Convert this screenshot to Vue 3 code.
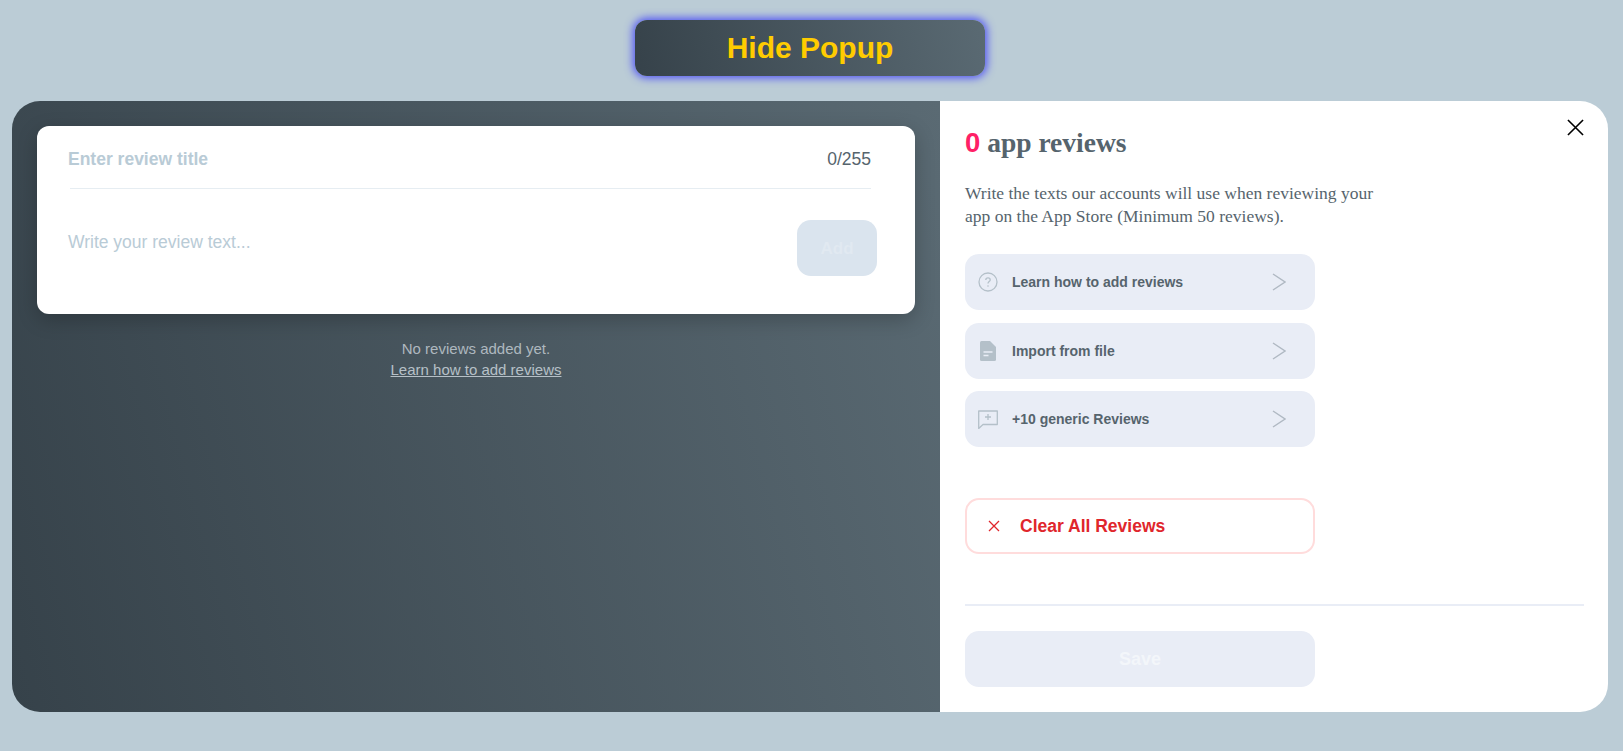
<script setup>
const actions = [
  { label: 'Learn how to add reviews', icon: 'help' },
  { label: 'Import from file', icon: 'file' },
  { label: '+10 generic Reviews', icon: 'comment' }
];
</script>

<template>
  <div class="page">
    <button class="toggle-btn">Hide Popup</button>

    <div class="popup">
      <div class="editor">
        <div class="review-card">
          <div class="title-row">
            <span class="title-placeholder">Enter review title</span>
            <span class="counter">0/255</span>
          </div>
          <div class="text-row">
            <span class="text-placeholder">Write your review text...</span>
            <button class="add-btn">Add</button>
          </div>
        </div>
        <div class="empty">
          <p>No reviews added yet.</p>
          <a href="#">Learn how to add reviews</a>
        </div>
      </div>

      <div class="sidebar">
        <svg class="close" viewBox="0 0 18 18" width="17" height="17">
          <path d="M1 1 17 17M17 1 1 17" stroke="#000" stroke-width="1.7" fill="none" />
        </svg>

        <h2><span class="count">0</span> app reviews</h2>
        <p class="desc">
          Write the texts our accounts will use when reviewing your<br />
          app on the App Store (Minimum 50 reviews).
        </p>

        <div class="actions">
          <button v-for="a in actions" :key="a.label" class="action">
            <svg class="action-icon" viewBox="0 0 20 20" width="20" height="20">
              <template v-if="a.icon === 'help'">
                <circle cx="10" cy="10" r="9" fill="none" stroke="#b4c0c9" stroke-width="1.3" />
                <path d="M7.8 8c0-1.3 1-2.1 2.2-2.1s2.2.8 2.2 2c0 1.6-2.2 1.7-2.2 3.5" fill="none" stroke="#b4c0c9" stroke-width="1.3" />
                <circle cx="10" cy="14" r=".8" fill="#b4c0c9" />
              </template>
              <template v-else-if="a.icon === 'file'">
                <path d="M2 1.500A1.500 1.500 0 0 1 3.500 0H12L18 6V18.500A1.500 1.500 0 0 1 16.500 20H3.500A1.500 1.500 0 0 1 2 18.500Z" fill="#b4c0c9" />
                <path d="M5.500 11h9M5.500 14.500h5" stroke="#e9edf6" stroke-width="1.300" />
              </template>
              <template v-else>
                <path d="M.7 2h18.600v13.500H5L.7 19.500Z" fill="none" stroke="#b4c0c9" stroke-width="1.300" stroke-linejoin="round" />
                <path d="M10 5v6M7 8h6" stroke="#b4c0c9" stroke-width="1.300" />
              </template>
            </svg>
            <span class="action-label">{{ a.label }}</span>
            <svg class="chevron" viewBox="0 0 14 18" width="14" height="18">
              <path d="M1 1 13 9 1 17" fill="none" stroke="#b0b9c3" stroke-width="1.500" />
            </svg>
          </button>
        </div>

        <button class="clear-btn">
          <svg viewBox="0 0 12 12" width="12" height="12">
            <path d="M1 1 11 11M11 1 1 11" stroke="#e0262c" stroke-width="1.300" fill="none" />
          </svg>
          <span>Clear All Reviews</span>
        </button>

        <div class="separator"></div>

        <button class="save-btn">Save</button>
      </div>
    </div>
  </div>
</template>

<style>
html, body { background: #bbccd6; }
</style>

<style scoped>
.page {
  box-sizing: border-box;
  height: 751px;
  padding: 20px 15px 40px 12px;
  display: flex;
  flex-direction: column;
  align-items: center;
  background: #bbccd6;
  font-family: "Liberation Sans", Arial, sans-serif;
  overflow: hidden;
}

button { font-family: inherit; border: none; cursor: pointer; }

.toggle-btn {
  width: 350px;
  height: 56px;
  flex: none;
  border-radius: 12px;
  background: linear-gradient(75deg, #36424a, #5a6a73);
  box-shadow: 0 0 9px 2px #4f52f5;
  color: #ffcc00;
  font-size: 30px;
  font-weight: 700;
}

.popup {
  width: 100%;
  height: 611px;
  margin-top: 25px;
  flex: none;
  display: flex;
  border-radius: 28px;
  overflow: hidden;
}

.editor {
  width: 928px;
  flex: none;
  box-sizing: border-box;
  padding: 25px 25px 0;
  background: linear-gradient(75deg, #36424a, #5a6a73);
}

.review-card {
  height: 188px;
  box-sizing: border-box;
  padding: 0 38px 0 31px;
  background: #fff;
  border-radius: 12px;
  box-shadow: 0 6px 20px rgba(0, 0, 0, 0.22);
}

.title-row {
  box-sizing: border-box;
  height: 63px;
  padding-top: 4px;
  margin-right: 6px;
  margin-left: 2px;
  display: flex;
  justify-content: space-between;
  align-items: center;
  border-bottom: 1px solid #e6edf2;
}

.title-placeholder {
  margin-left: -2px;
  color: #b9cbd6;
  font-size: 17.5px;
  font-weight: 700;
}

.counter {
  color: #56646d;
  font-size: 17.5px;
}

.text-row {
  display: flex;
  justify-content: space-between;
  align-items: flex-start;
  padding-top: 31px;
}

.text-placeholder {
  margin-top: 12px;
  color: #b9cbd6;
  font-size: 17.5px;
}

.add-btn {
  width: 80px;
  height: 56px;
  padding-top: 3px;
  border-radius: 14px;
  background: #dae4ee;
  color: #e1e9f1;
  font-size: 17px;
  font-weight: 700;
}

.empty {
  margin-top: 24px;
  text-align: center;
  color: #aeb8bf;
  font-size: 15px;
  line-height: 21px;
}

.empty p { margin: 0; }
.empty a { color: #b6c0c7; }

.sidebar {
  position: relative;
  flex: 1;
  box-sizing: border-box;
  padding: 26px 24px 0 25px;
  background: #fff;
}

.close {
  position: absolute;
  top: 18px;
  right: 24px;
}

h2 {
  margin: 0;
  color: #56646d;
  font-family: "Liberation Serif", "Times New Roman", serif;
  font-size: 27.5px;
  font-weight: 700;
  line-height: 32px;
}

.count {
  color: #ff2066;
  font-family: "Liberation Sans", Arial, sans-serif;
}

.desc {
  margin: 23px 0 0;
  color: #56646d;
  font-family: "Liberation Serif", "Times New Roman", serif;
  font-size: 17.5px;
  line-height: 23px;
}

.actions {
  margin-top: 26px;
  display: flex;
  flex-direction: column;
  gap: 12.5px;
}

.action {
  width: 350px;
  height: 56px;
  padding: 0 29px 0 13px;
  display: flex;
  align-items: center;
  border-radius: 14px;
  background: #e9edf6;
}

.action-icon { flex: none; }

.action-label {
  flex: 1;
  margin-left: 14px;
  text-align: left;
  color: #56646d;
  font-size: 14px;
  font-weight: 700;
}

.clear-btn {
  width: 350px;
  height: 56px;
  margin-top: 51px;
  padding: 0 0 0 21px;
  display: flex;
  align-items: center;
  gap: 20px;
  box-sizing: border-box;
  background: #fff;
  border: 2px solid #ffdcdc;
  border-radius: 14px;
  color: #e0262c;
  font-size: 17.5px;
  font-weight: 700;
}

.separator {
  height: 2px;
  margin-top: 50px;
  background: #e9edf6;
}

.save-btn {
  width: 350px;
  height: 56px;
  margin-top: 25px;
  display: block;
  border-radius: 14px;
  background: #e9edf6;
  color: #f3f6fa;
  font-size: 18px;
  font-weight: 700;
}
</style>
